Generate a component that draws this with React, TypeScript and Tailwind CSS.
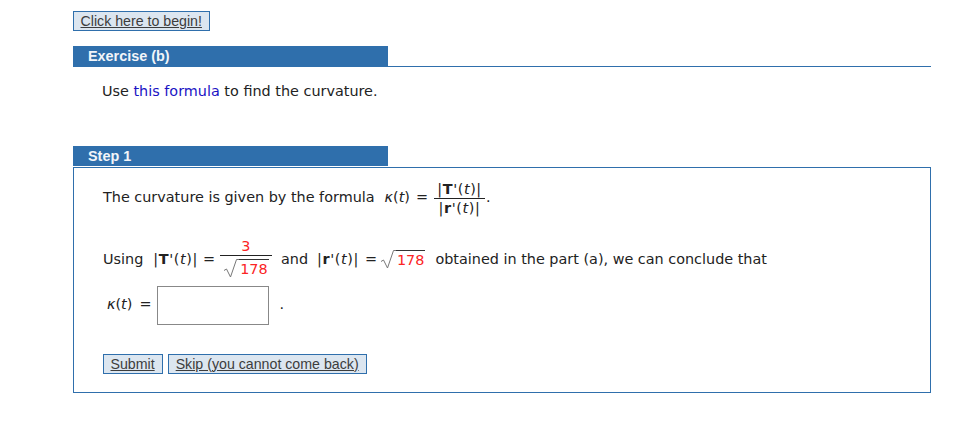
import React from 'react';

const BLUE = 'border-[#2f6fac]';

function ActionButton({ label }: { label: string }) {
  return (
    <button className={`h-[20px] border ${BLUE} bg-[#dce6f0] pl-[6.5px] pr-[7.5px] font-['Liberation_Sans',sans-serif] text-[14.2px] leading-[17px] text-[#3d3d3d] underline`}>
      {label}
    </button>
  );
}

function Header({ title }: { title: string }) {
  return (
    <div className="h-[21px] w-[315px] bg-[#2f6fac] pl-[15px] font-['Liberation_Sans',sans-serif] text-[14.4px] font-bold leading-[20px] text-[#f2f5f9]">
      {title}
    </div>
  );
}

function Kt() {
  return (
    <span className="whitespace-nowrap">
      <i>κ</i>(<i>t</i>)
    </span>
  );
}

function Radical() {
  return (
    <span className="inline-flex items-start">
      <svg width="16" height="19" viewBox="0 0 16 19" fill="none">
        <path d="M1 11.5 L3.5 10 L7.5 18 L13.5 0.5 L16 0.5" stroke="#777" strokeWidth="1" />
      </svg>
      <span className="border-t border-[#333] pl-[1px] pr-px text-[14.4px] leading-[19px] text-[#fb2424]">178</span>
    </span>
  );
}

export default function App() {
  return (
    <div className="h-[423px] w-[954px] overflow-hidden bg-white pl-[73px] pr-[23px] pt-[11px] font-['DejaVu_Sans',sans-serif] text-[14.4px] text-[#222]">
      <div className="flex">
        <ActionButton label="Click here to begin!" />
      </div>

      <div className={`mt-[15px] h-[21px] border-b ${BLUE}`}>
        <Header title="Exercise (b)" />
      </div>
      <p className="ml-[29px] mt-[14px] h-[20px] leading-[20px]">
        Use <span className="text-[#1a13c4]">this formula</span> to find the curvature.
      </p>

      <div className="mt-[45px]">
        <div className="h-[20px] w-[315px] overflow-hidden">
          <Header title="Step 1" />
        </div>
        <div className={`mt-px h-[226px] border ${BLUE} pl-[29px]`}>
          {/* first formula line */}
          <div className="flex h-[49px] items-center pt-[11px]">
            <span>The curvature is given by the formula</span>
            <span className="ml-[10px]"><Kt /></span>
            <span className="ml-[6px]">=</span>
            <span className="ml-[6px] inline-flex w-[51px] flex-col items-center leading-[18px] tracking-[0.6px]">
              <span className="w-full whitespace-nowrap border-b border-[#222] text-center">
                |<b>T</b>'(<i>t</i>)|
              </span>
              <span className="whitespace-nowrap">
                |<b>r</b>'(<i>t</i>)|
              </span>
            </span>
            <span className="ml-px">.</span>
          </div>

          {/* second formula line */}
          <div className="mt-[20px] flex h-[46px] items-center">
            <span>Using</span>
            <span className="ml-[10px] whitespace-nowrap tracking-[0.6px]">
              |<b>T</b>'(<i>t</i>)|
            </span>
            <span className="ml-[5px]">=</span>
            <span className="mb-[3px] ml-[5px] inline-flex w-[52px] flex-col items-center">
              <span className="h-[17px] leading-[17px] text-[#fb2424]">3</span>
              <span className="flex w-full justify-center border-t border-[#222] pt-[3px]">
                <Radical />
              </span>
            </span>
            <span className="ml-[9px]">and</span>
            <span className="ml-[9px] whitespace-nowrap tracking-[0.6px]">
              |<b>r</b>'(<i>t</i>)|
            </span>
            <span className="ml-[6px]">=</span>
            <span className="ml-[3px] inline-flex"><Radical /></span>
            <span className="ml-[10px]">obtained in the part (a), we can conclude that</span>
          </div>

          {/* answer line */}
          <div className="mt-[2px] flex h-[40px] items-center">
            <span className="ml-[4px]"><Kt /></span>
            <span className="ml-[7px]">=</span>
            <input className="ml-[6px] h-[39px] w-[112px] border border-[#888] bg-white" />
            <span className="ml-[10px]">.</span>
          </div>

          <div className="mt-[29px] flex gap-[5px]">
            <ActionButton label="Submit" />
            <ActionButton label="Skip (you cannot come back)" />
          </div>
        </div>
      </div>
    </div>
  );
}
